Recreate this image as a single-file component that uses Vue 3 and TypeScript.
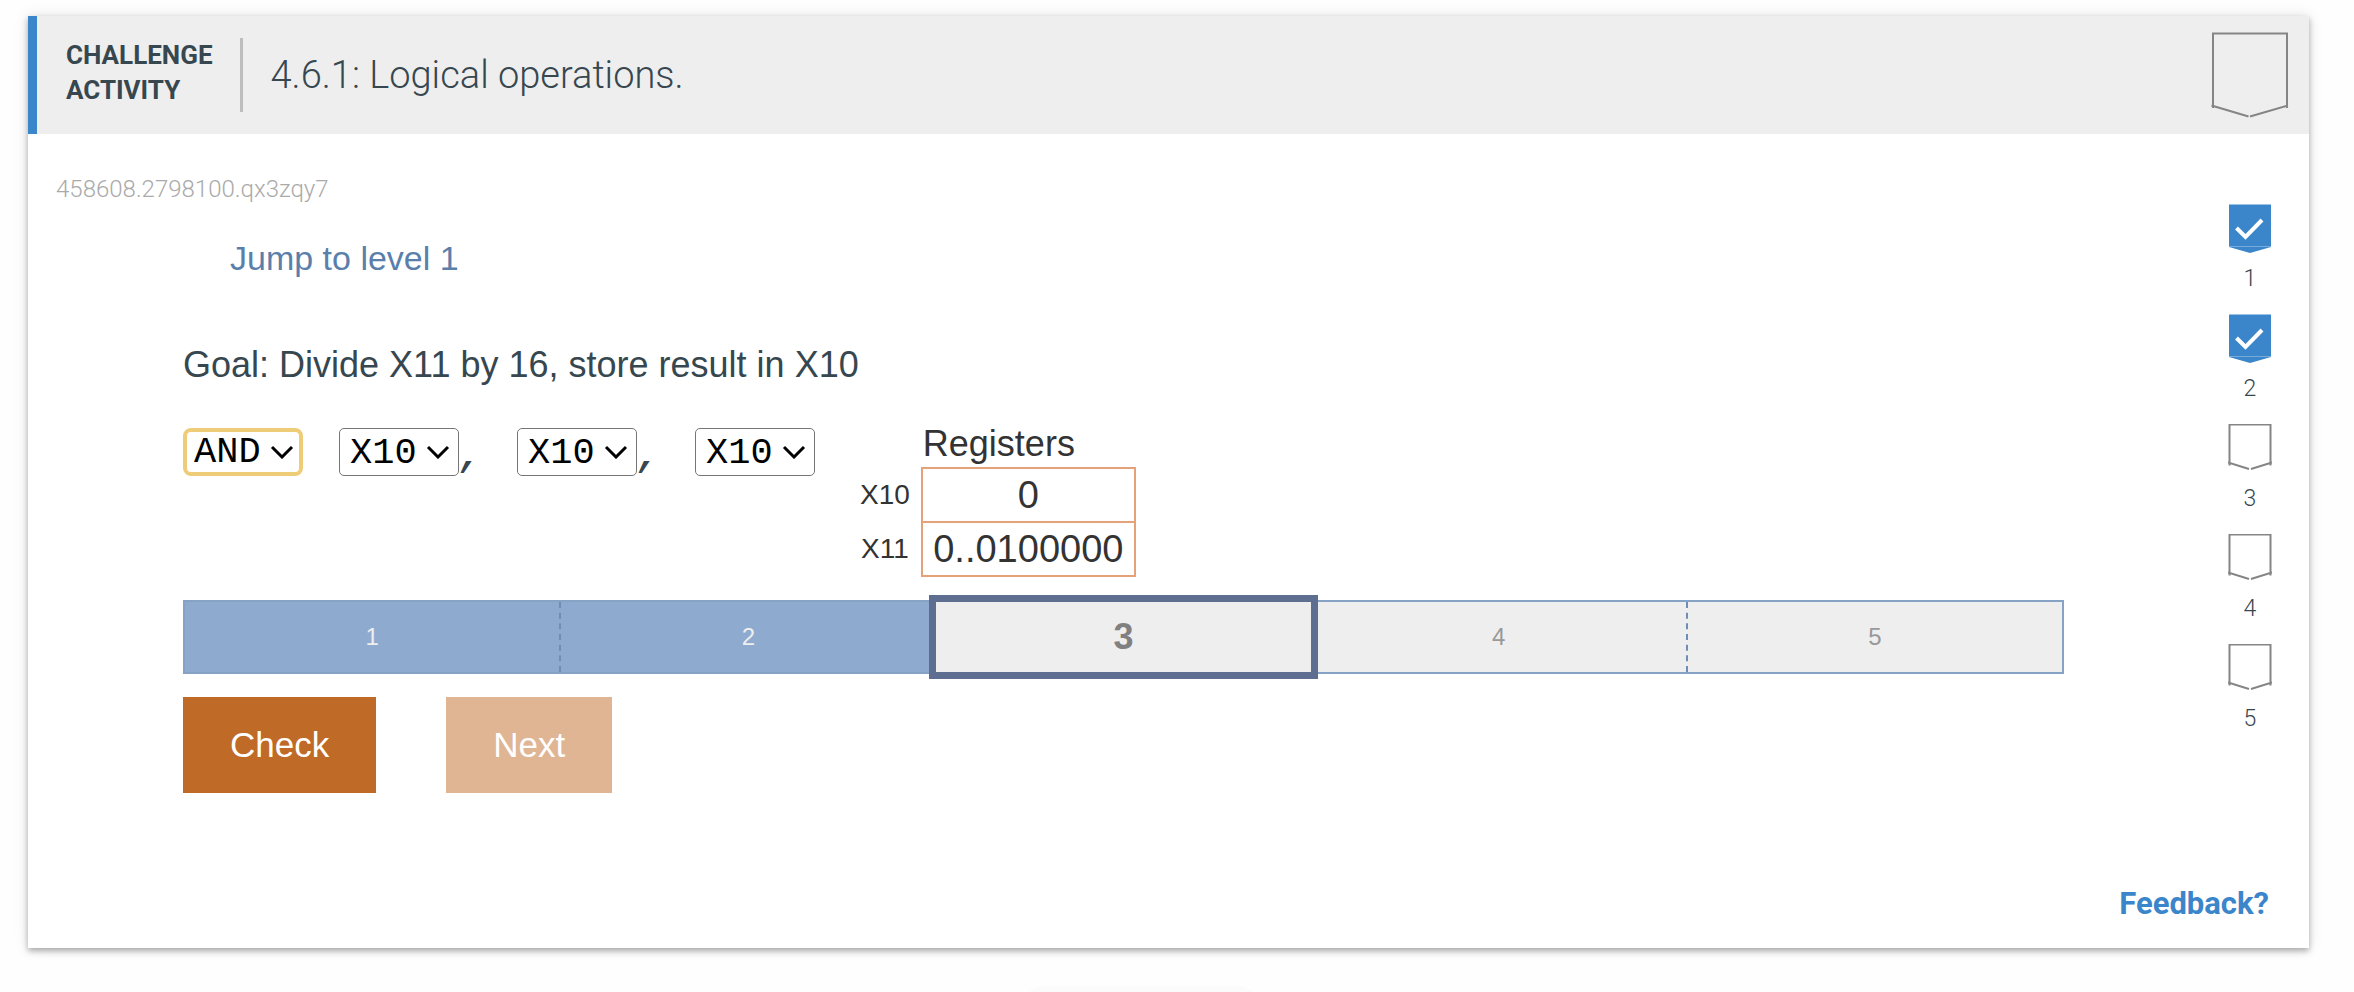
<script setup lang="ts">
import { ref } from 'vue'

interface Level {
  id: number
  done: boolean
}

interface Operand {
  id: string
  label: string
  value: string
  options: string[]
  comma: boolean
}

const levels: Level[] = [
  { id: 1, done: true },
  { id: 2, done: true },
  { id: 3, done: false },
  { id: 4, done: false },
  { id: 5, done: false },
]
const currentLevel = 3

const registerNames = ['X10', 'X11']
const operands = ref<Operand[]>([
  { id: 'op', label: 'Operation', value: 'AND', options: ['AND', 'ORR', 'LSL', 'LSR'], comma: false },
  { id: 'rd', label: 'Destination register', value: 'X10', options: registerNames, comma: true },
  { id: 'rn', label: 'First source register', value: 'X10', options: registerNames, comma: true },
  { id: 'rm', label: 'Second source', value: 'X10', options: registerNames, comma: false },
])

const registers = [
  { name: 'X10', value: '0' },
  { name: 'X11', value: '0..0100000' },
]
</script>

<template>
  <div class="page">
    <section class="card">
      <header class="head">
        <div class="kind">CHALLENGE<br />ACTIVITY</div>
        <h1 class="title">4.6.1: Logical operations.</h1>
        <svg class="badge-large" viewBox="0 0 78 86" aria-hidden="true">
          <path d="M2 76V1.500H76V76M0.500 73.500L37.500 84.500M39 84.500L77 73.500" />
        </svg>
      </header>

      <div class="ident">458608.2798100.qx3zqy7</div>

      <div class="body">
        <main class="tool">
          <a class="jump" href="#level-1">Jump to level 1</a>
          <p class="goal">Goal: Divide X11 by 16, store result in X10</p>

          <div class="workspace">
            <div class="instruction">
              <div v-for="item in operands" :key="item.id" class="operand">
                <span class="picker" :class="{ active: item.id === 'op' }">
                  <select :id="item.id" v-model="item.value" :aria-label="item.label">
                    <option v-for="option in item.options" :key="option">{{ option }}</option>
                  </select>
                  <svg class="chevron" viewBox="0 0 24 14" aria-hidden="true">
                    <path d="M2 2L12 12L22 2" />
                  </svg>
                </span>
                <span v-if="item.comma" class="comma">,</span>
              </div>
            </div>

            <table class="registers">
              <thead>
                <tr>
                  <td></td>
                  <th scope="col">Registers</th>
                </tr>
              </thead>
              <tbody>
                <tr v-for="register in registers" :key="register.name">
                  <th scope="row">{{ register.name }}</th>
                  <td class="value">{{ register.value }}</td>
                </tr>
              </tbody>
            </table>
          </div>

          <ol class="progress">
            <li
              v-for="level in levels"
              :key="level.id"
              :class="{ done: level.done, current: level.id === currentLevel }"
            >
              {{ level.id }}
            </li>
          </ol>

          <div class="actions">
            <button type="button" class="check">Check</button>
            <button type="button" class="next" disabled>Next</button>
          </div>
        </main>

        <aside class="levels">
          <div v-for="level in levels" :key="level.id" class="level">
            <svg viewBox="0 0 44 50" aria-hidden="true">
              <template v-if="level.done">
                <path class="flag" d="M1 0.500H43V43L22 49L1 43Z" />
                <path class="seam" d="M1 42.500H43" />
                <path class="tick" d="M8.500 24L17.500 33L34 16" />
              </template>
              <path
                v-else
                class="outline"
                d="M1.500 41.500V0.500H42.500V41.500M0 38.500L21 45M23 45L44 38.500"
              />
            </svg>
            <span>{{ level.id }}</span>
          </div>
        </aside>
      </div>

      <footer class="foot">
        <a href="#feedback">Feedback?</a>
      </footer>
    </section>
    <div class="toast-area">
      <div class="toast"></div>
    </div>
  </div>
</template>

<style>
body {
  margin: 0;
  background: #fefefe;
}
</style>

<style scoped>
.page {
  height: 100vh;
  overflow: hidden;
  font-family: Roboto, 'Liberation Sans', sans-serif;
  color: #37474f;
}

.card {
  margin: 16px 45px 0 28px;
  background: #fff;
  box-shadow: 0 3px 6px rgba(0, 0, 0, 0.3), 0 0 14px rgba(0, 0, 0, 0.1);
}

.head {
  display: flex;
  align-items: center;
  box-sizing: border-box;
  height: 118px;
  padding: 0 20px 0 29px;
  border-left: 9px solid #3b86cb;
  background: #eee;
}

.kind {
  padding: 0 27px 4px 0;
  border-right: 3px solid #bdbdbd;
  font-size: 26px;
  line-height: 35px;
  font-weight: 700;
}

.title {
  flex: 1;
  margin: 0 0 0 28px;
  font-size: 38px;
  line-height: 44px;
  font-weight: 300;
}

.badge-large {
  width: 78px;
  height: 86px;
  fill: none;
  stroke: #858585;
  stroke-width: 2;
}

.ident {
  padding: 40px 28px 0;
  font-size: 24px;
  line-height: 30px;
  font-weight: 300;
  color: #aaa;
}

.body {
  display: flex;
  align-items: flex-start;
  padding: 0 37px 0 155px;
}

.tool {
  flex: 1;
  padding-top: 32px;
  font-family: 'Liberation Sans', Arial, sans-serif;
}

.jump {
  display: block;
  width: max-content;
  margin-left: 47px;
  font-size: 34px;
  line-height: 44px;
  color: #5a7fab;
  text-decoration: none;
}

.goal {
  margin: 63px 0 0;
  font-size: 36px;
  line-height: 44px;
}

.workspace {
  display: flex;
  align-items: flex-start;
  margin-top: 34px;
}

.instruction {
  display: flex;
  padding-top: 7px;
}

.operand {
  display: flex;
  width: 178px;
  font-family: 'Liberation Mono', 'Courier New', monospace;
  font-size: 37px;
  line-height: 56px;
}

.operand:first-child {
  width: 156px;
}

.operand:last-child {
  width: 120px;
}

.picker {
  position: relative;
  width: 120px;
  height: 48px;
}

.picker select {
  appearance: none;
  display: block;
  width: 100%;
  height: 100%;
  padding: 1px 0 0 10px;
  border: 1px solid #767676;
  border-radius: 5px;
  background: #fff;
  color: #000;
  font: inherit;
  line-height: 44px;
  outline: none;
}

.picker.active select {
  padding: 1px 0 0 7px;
  border: 4px solid #efcc78;
  border-radius: 8px;
  line-height: 39px;
}

.chevron {
  position: absolute;
  right: 9px;
  top: 17px;
  width: 24px;
  height: 14px;
  fill: none;
  stroke: #000;
  stroke-width: 3;
  pointer-events: none;
}

.comma {
  font-style: italic;
  font-weight: 700;
}

.registers {
  margin-left: 45px;
  border-collapse: collapse;
  color: #333;
}

.registers td,
.registers th {
  padding: 0;
  font-weight: 400;
}

.registers thead th {
  padding: 0 1px;
  text-align: left;
  font-size: 36px;
  line-height: 46px;
}

.registers tbody th {
  padding-right: 11px;
  font-size: 28px;
  line-height: 52px;
}

.registers .value {
  width: 211px;
  border: 2px solid #e5a178;
  text-align: center;
  font-size: 38px;
  line-height: 52px;
}

.progress {
  display: flex;
  height: 70px;
  margin: 23px 0 0;
  padding: 0;
  border: 2px solid #86a3c5;
  background: #eee;
  list-style: none;
  font-size: 24px;
  line-height: 70px;
  text-align: center;
  color: #999;
}

.progress li {
  flex: 1;
}

.progress li + li {
  border-left: 2px dashed #6f8eb5;
}

.progress .done {
  background: #8faacf;
  color: #eee;
}

.progress .current {
  margin: -7px -6px;
  border: 7px solid #5d6e91;
  background: #eee;
  font-size: 36px;
  font-weight: 700;
  color: #808080;
}

.progress .current + li {
  border-left: 0;
}

.actions {
  display: flex;
  gap: 70px;
  margin-top: 23px;
}

.actions button {
  height: 96px;
  padding: 0 47px;
  border: 0;
  font-family: inherit;
  font-size: 35px;
  color: #fff;
}

.actions .check {
  background: #bf6a26;
}

.actions .next {
  background: #dfb593;
}

.levels {
  display: flex;
  flex-direction: column;
  gap: 14px;
  width: 44px;
  margin-left: 164px;
}

.level {
  display: flex;
  flex-direction: column;
  align-items: center;
  height: 96px;
  font-size: 23px;
  line-height: 26px;
  font-weight: 300;
}

.level svg {
  width: 44px;
  height: 50px;
  margin-bottom: 12px;
}

.flag {
  fill: #3b86cb;
}

.seam {
  stroke: #76aadb;
  stroke-width: 1;
}

.tick {
  fill: none;
  stroke: #fff;
  stroke-width: 4;
}

.outline {
  fill: none;
  stroke: #858585;
  stroke-width: 2;
  overflow: visible;
}

.foot {
  display: flex;
  justify-content: flex-end;
  padding: 93px 40px 26px;
  font-size: 31px;
  line-height: 36px;
  font-weight: 700;
}

.foot a {
  color: #3b86cb;
  text-decoration: none;
}

.toast-area {
  padding: 38px 72px 0 0;
}

.toast {
  width: 240px;
  height: 48px;
  margin: 0 auto;
  border-radius: 24px;
  background: #fbfbfb;
}
</style>
